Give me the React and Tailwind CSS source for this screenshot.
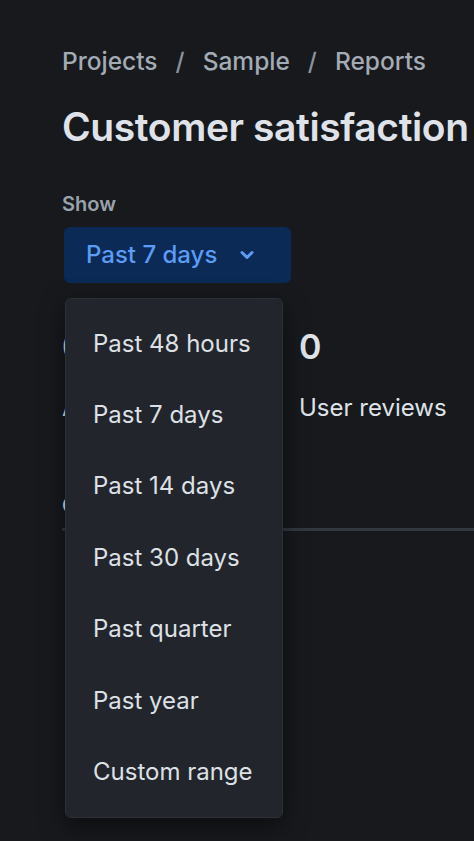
import React from "react";

const items = [
  "Past 48 hours",
  "Past 7 days",
  "Past 14 days",
  "Past 30 days",
  "Past quarter",
  "Past year",
  "Custom range",
];

export default function App() {
  return (
    <div
      className="min-h-[841px] w-[474px] overflow-hidden bg-[#17191d] text-[#dfe3e8]"
      style={{ fontFamily: "Inter, 'Noto Sans', sans-serif" }}
    >
      <div className="pl-[62px] pt-[45px]">
        <div className="flex items-center h-[32px] text-[24.5px] font-medium text-[#a3abb5] whitespace-nowrap">
          <span>Projects</span>
          <span className="mx-[18px] text-[#8a929c]">/</span>
          <span>Sample</span>
          <span className="mx-[18px] text-[#8a929c]">/</span>
          <span>Reports</span>
        </div>
        <h1 className="mt-[26px] h-[48px] leading-[48px] text-[39px] font-semibold text-[#dfe3e9] whitespace-nowrap tracking-[-0.4px]">
          Customer satisfaction
        </h1>
        <div className="mt-[41px] h-[24px] leading-[24px] text-[20px] font-semibold text-[#9aa2ac]">
          Show
        </div>
        <div className="relative">
          <button className="mt-[11px] ml-[2px] flex h-[56px] w-[227px] items-center rounded-[6px] bg-[#0b2a55] pl-[22px] text-[24px] font-medium text-[#5b9cf5]">
            <span>Past 7 days</span>
            <svg
              className="ml-[23px]"
              width="14"
              height="10"
              viewBox="0 0 14 10"
              fill="none"
            >
              <polyline
                points="2,2.5 7,7.5 12,2.5"
                stroke="#5b9cf5"
                strokeWidth="3"
                strokeLinecap="round"
                strokeLinejoin="round"
              />
            </svg>
          </button>

          <div className="mt-[44px] flex">
            <div className="w-[237px]">
              <div className="h-[40px] leading-[40px] text-[34px] font-semibold">0</div>
              <div className="mt-[25px] text-[24px] leading-[32px]">Avg. rating</div>
            </div>
            <div>
              <div className="h-[40px] leading-[40px] text-[34px] font-semibold">0</div>
              <div className="mt-[25px] text-[24px] leading-[32px]">User reviews</div>
            </div>
          </div>
          <div className="mt-[65px] h-[32px] text-[22px] leading-[32px] font-semibold">Comments</div>
          <div className="mt-[7px] h-[3px] bg-[#33383f]" />

          <div className="absolute left-[3px] top-[71px] w-[218px] rounded-[6px] border border-[#2c3037] bg-[#22252b] py-[9px] shadow-[0_8px_24px_rgba(0,0,0,0.5)]">
            {items.map((t) => (
              <div
                key={t}
                className="flex h-[71.4px] items-center pl-[27px] text-[24px] text-[#dde1e6] whitespace-nowrap"
              >
                {t}
              </div>
            ))}
          </div>
        </div>
      </div>
    </div>
  );
}
